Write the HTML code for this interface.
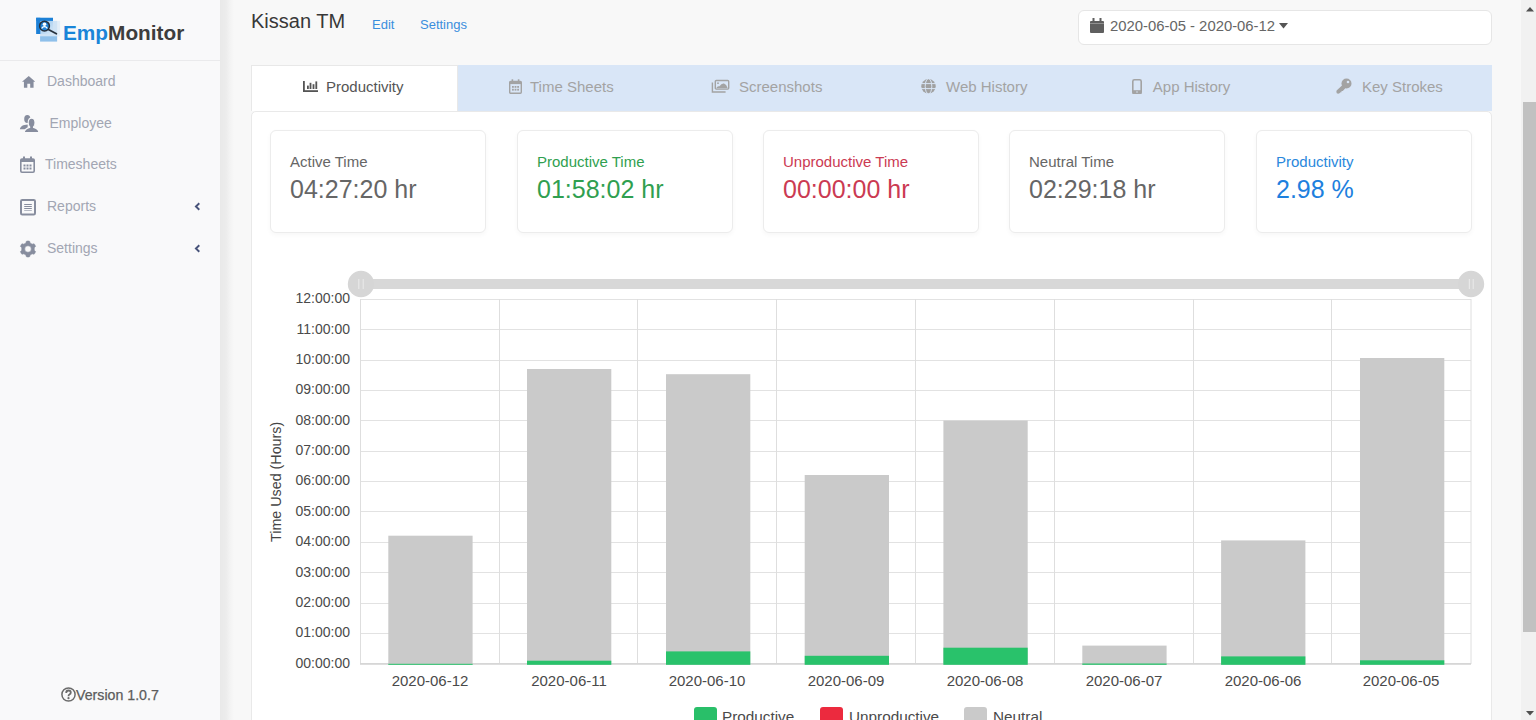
<!DOCTYPE html>
<html><head><meta charset="utf-8">
<style>
*{box-sizing:border-box;margin:0;padding:0}
html,body{width:1536px;height:720px;overflow:hidden;font-family:"Liberation Sans",sans-serif;background:#f8f8f8;position:relative}
.a{position:absolute;white-space:nowrap}
#side{position:absolute;left:0;top:0;width:220px;height:720px;background:#f9f9fa}
#shadow{position:absolute;left:220px;top:0;width:14px;height:720px;background:linear-gradient(to right,#e9e9e9 0px,#ececec 6px,#f3f3f3 10px,#f8f8f8 14px)}
.nav{font-size:14px;color:#a2a6b3;line-height:16px}
.ic{position:absolute}
.chev{position:absolute}
#scroll{position:absolute;left:1521px;top:0;width:15px;height:720px;background:#f1f1f1}
#thumb{position:absolute;left:1523px;top:102px;width:13px;height:530px;background:#c1c1c1}
.lnk{font-size:13px;color:#3a8edd;line-height:16px}
#date{position:absolute;left:1078px;top:10px;width:414px;height:35px;background:#fff;border:1px solid #e6e6e6;border-radius:6px}
#tabs{position:absolute;left:251px;top:65px;width:1241px;height:46px;background:#d9e6f7}
#tab1{position:absolute;left:251px;top:65px;width:206.5px;height:46px;background:#fff;border:1px solid #e8e8e8;border-bottom:none}
.tab{font-size:15px;color:#a3a3a3;line-height:18px}
#card{position:absolute;left:251px;top:111px;width:1241px;height:640px;background:#fff;border:1px solid #e9e9e9;border-radius:5px}
.stat{position:absolute;top:130px;width:216.3px;height:102.5px;background:#fff;border:1px solid #ececec;border-radius:6px;box-shadow:0 2px 5px rgba(0,0,0,0.035)}
.sl{position:absolute;left:19px;top:22.6px;font-size:15px;line-height:16px;white-space:nowrap}
.sv{position:absolute;left:19px;top:43.5px;font-size:25px;line-height:28px;white-space:nowrap}
.yl{font-size:14px;color:#4a4a4a;line-height:14px;text-align:right;width:80px}
.xl{font-size:15px;color:#4a4a4a;line-height:16px;text-align:center;width:138px}
.lg{font-size:15.3px;color:#4a4a4a;line-height:16px}
</style></head>
<body>
<div id="side"></div>
<div id="shadow"></div>
<div class="a" style="left:0;top:60px;width:220px;height:1px;background:#eaeaec"></div>

<!-- logo -->
<svg class="a" style="left:32px;top:14px" width="30" height="30" viewBox="0 0 30 30">
  <defs><linearGradient id="lg1" x1="0" y1="0" x2="1" y2="1"><stop offset="0" stop-color="#7fb8ea"/><stop offset="1" stop-color="#d9e9f7"/></linearGradient></defs>
  <rect x="8.1" y="6.9" width="20" height="15.5" fill="#e3eef8"/>
  <rect x="8.1" y="6.9" width="17" height="20.6" fill="#cfe3f5"/>
  <rect x="8.1" y="22.3" width="17" height="5.2" fill="#8fc0ea"/>
  <rect x="4.2" y="3.8" width="16.8" height="16.2" fill="url(#lg1)"/>
  <rect x="4.2" y="3.8" width="16.8" height="3.1" fill="#1c80d6"/>
  <rect x="4.2" y="3.8" width="4.1" height="16.2" fill="#1c80d6"/>
  <circle cx="12.5" cy="12.1" r="4.9" fill="#1f80d4" stroke="#26313d" stroke-width="1.5"/>
  <circle cx="12.5" cy="10.3" r="1.8" fill="#fff"/>
  <path d="M9.2 14.6 Q9.8 11.9 12.5 11.9 Q15.2 11.9 15.8 14.6 L14.4 14.6 Q13.9 13.2 12.5 13.2 Q11.1 13.2 10.6 14.6 Z" fill="#fff"/>
  <line x1="16.4" y1="15.4" x2="24.4" y2="19.8" stroke="#26313d" stroke-width="1.7" stroke-linecap="round"/>
</svg>
<div class="a" style="left:63px;top:21px;font-size:20.8px;font-weight:bold;line-height:24px"><span style="color:#1a85d8">Emp</span><span style="color:#3d3d3d">Monitor</span></div>

<!-- nav -->
<svg class="ic" style="left:21.7px;top:76.3px" width="13.5" height="11.7" viewBox="0 0 14 12"><path d="M7 0 L0 6 L2 6 L2 12 L5.5 12 L5.5 8 L8.5 8 L8.5 12 L12 12 L12 6 L14 6 Z" fill="#878d9e"/></svg>
<div class="a nav" style="left:47px;top:73px">Dashboard</div>

<svg class="ic" style="left:16px;top:110px" width="28" height="28" viewBox="0 0 28 28"><g fill="#878d9e"><ellipse cx="11.3" cy="9" rx="3.1" ry="4.1"/><path d="M3.9 19.2 C4.5 16.2 7 15 11.7 14.6 L11.7 19.2 Z"/></g><path fill="#878d9e" stroke="#f9f9fa" stroke-width="1.1" d="M8.2 22.6 C8.6 19.2 11.3 17.9 13.7 17.4 L13.7 16.9 C12.7 16.1 12.2 14.6 12.2 12.8 C12.2 10 13.7 8.1 15.6 8.1 C17.5 8.1 19 10 19 12.8 C19 14.6 18.5 16.1 17.5 16.9 L17.5 17.4 C19.9 17.9 22.6 19.2 23 22.6 Z"/></svg>
<div class="a nav" style="left:49.5px;top:114.8px">Employee</div>

<svg class="ic" style="left:20px;top:156px" width="15" height="17" viewBox="0 0 15 17"><rect x="0.8" y="3" width="13.4" height="13.2" rx="1.2" fill="none" stroke="#878d9e" stroke-width="1.6"/><rect x="0.8" y="3" width="13.4" height="3" fill="#878d9e"/><rect x="3" y="0.5" width="2" height="4" fill="#878d9e"/><rect x="10" y="0.5" width="2" height="4" fill="#878d9e"/><g fill="#878d9e"><rect x="3.5" y="8.5" width="2" height="2"/><rect x="6.5" y="8.5" width="2" height="2"/><rect x="9.5" y="8.5" width="2" height="2"/><rect x="3.5" y="11.5" width="2" height="2"/><rect x="6.5" y="11.5" width="2" height="2"/><rect x="9.5" y="11.5" width="2" height="2"/></g></svg>
<div class="a nav" style="left:45px;top:156px">Timesheets</div>

<svg class="ic" style="left:20px;top:198px" width="16" height="18" viewBox="0 0 16 18"><rect x="1" y="2" width="14" height="14.5" rx="1.3" fill="none" stroke="#878d9e" stroke-width="2"/><g fill="#878d9e"><rect x="4.2" y="6" width="7.6" height="1"/><rect x="4.2" y="8" width="7.6" height="1"/><rect x="4.2" y="10" width="7.6" height="1"/><rect x="4.2" y="12" width="7.6" height="1" opacity="0.6"/></g></svg>
<div class="a nav" style="left:47px;top:198px">Reports</div>
<svg class="chev" style="left:194px;top:202px" width="7" height="9" viewBox="0 0 7 9"><path d="M5.3 1.2 L1.9 4.5 L5.3 7.8" fill="none" stroke="#48537a" stroke-width="1.9"/></svg>

<svg class="ic" style="left:18.1px;top:238.8px" width="20" height="20" viewBox="0 0 20 20"><path fill="#878d9e" fill-rule="evenodd" stroke="#878d9e" stroke-width="0.6" stroke-linejoin="round" d="M16.30 10.00 L16.30 9.78 L16.28 9.56 L16.27 9.34 L16.24 9.12 L16.20 8.91 L16.37 8.65 L16.73 8.32 L17.08 7.97 L17.41 7.59 L17.52 7.26 L17.42 7.00 L17.31 6.75 L17.19 6.49 L17.06 6.24 L16.93 6.00 L16.78 5.76 L16.63 5.53 L16.47 5.30 L16.30 5.07 L16.13 4.86 L15.79 4.79 L15.30 4.89 L14.82 5.01 L14.36 5.16 L14.05 5.17 L13.88 5.04 L13.70 4.90 L13.52 4.78 L13.34 4.66 L13.15 4.54 L12.96 4.44 L12.76 4.34 L12.56 4.24 L12.36 4.16 L12.15 4.08 L12.01 3.81 L11.91 3.33 L11.78 2.86 L11.62 2.38 L11.39 2.12 L11.11 2.08 L10.84 2.04 L10.56 2.02 L10.28 2.00 L10.00 2.00 L9.72 2.00 L9.44 2.02 L9.16 2.04 L8.89 2.08 L8.61 2.12 L8.38 2.38 L8.22 2.86 L8.09 3.33 L7.99 3.81 L7.85 4.08 L7.64 4.16 L7.44 4.24 L7.24 4.34 L7.04 4.44 L6.85 4.54 L6.66 4.66 L6.48 4.78 L6.30 4.90 L6.12 5.04 L5.95 5.17 L5.64 5.16 L5.18 5.01 L4.70 4.89 L4.21 4.79 L3.87 4.86 L3.70 5.07 L3.53 5.30 L3.37 5.53 L3.22 5.76 L3.07 6.00 L2.94 6.24 L2.81 6.49 L2.69 6.75 L2.58 7.00 L2.48 7.26 L2.59 7.59 L2.92 7.97 L3.27 8.32 L3.63 8.65 L3.80 8.91 L3.76 9.12 L3.73 9.34 L3.72 9.56 L3.70 9.78 L3.70 10.00 L3.70 10.22 L3.72 10.44 L3.73 10.66 L3.76 10.88 L3.80 11.09 L3.63 11.35 L3.27 11.68 L2.92 12.03 L2.59 12.41 L2.48 12.74 L2.58 13.00 L2.69 13.25 L2.81 13.51 L2.94 13.76 L3.07 14.00 L3.22 14.24 L3.37 14.47 L3.53 14.70 L3.70 14.93 L3.87 15.14 L4.21 15.21 L4.70 15.11 L5.18 14.99 L5.64 14.84 L5.95 14.83 L6.12 14.96 L6.30 15.10 L6.48 15.22 L6.66 15.34 L6.85 15.46 L7.04 15.56 L7.24 15.66 L7.44 15.76 L7.64 15.84 L7.85 15.92 L7.99 16.19 L8.09 16.67 L8.22 17.14 L8.38 17.62 L8.61 17.88 L8.89 17.92 L9.16 17.96 L9.44 17.98 L9.72 18.00 L10.00 18.00 L10.28 18.00 L10.56 17.98 L10.84 17.96 L11.11 17.92 L11.39 17.88 L11.62 17.62 L11.78 17.14 L11.91 16.67 L12.01 16.19 L12.15 15.92 L12.36 15.84 L12.56 15.76 L12.76 15.66 L12.96 15.56 L13.15 15.46 L13.34 15.34 L13.52 15.22 L13.70 15.10 L13.88 14.96 L14.05 14.83 L14.36 14.84 L14.82 14.99 L15.30 15.11 L15.79 15.21 L16.13 15.14 L16.30 14.93 L16.47 14.70 L16.63 14.47 L16.78 14.24 L16.93 14.00 L17.06 13.76 L17.19 13.51 L17.31 13.25 L17.42 13.00 L17.52 12.74 L17.41 12.41 L17.08 12.03 L16.73 11.68 L16.37 11.35 L16.20 11.09 L16.24 10.88 L16.27 10.66 L16.28 10.44 L16.30 10.22 Z M13.30 10.00 A3.3 3.3 0 1 0 6.70 10.00 A3.3 3.3 0 1 0 13.30 10.00 Z"/></svg>
<div class="a nav" style="left:47px;top:240px">Settings</div>
<svg class="chev" style="left:194px;top:244px" width="7" height="9" viewBox="0 0 7 9"><path d="M5.3 1.2 L1.9 4.5 L5.3 7.8" fill="none" stroke="#48537a" stroke-width="1.9"/></svg>

<svg class="a" style="left:61px;top:686.5px" width="15" height="15" viewBox="0 0 15 15"><circle cx="7.5" cy="7.5" r="6.6" fill="none" stroke="#6b6b6b" stroke-width="1.5"/><path d="M5.2 5.9 Q5.2 3.5 7.5 3.5 Q9.8 3.5 9.8 5.6 Q9.8 6.9 8.4 7.5 Q7.5 7.9 7.5 9.2" fill="none" stroke="#6b6b6b" stroke-width="1.8"/><circle cx="7.5" cy="11.2" r="1.1" fill="#6b6b6b"/></svg>
<div class="a" style="left:76px;top:687px;font-size:14.2px;color:#5c5c5c;line-height:16px;-webkit-text-stroke:0.25px #5c5c5c">Version 1.0.7</div>

<!-- header -->
<div class="a" style="left:251px;top:8.8px;font-size:20px;color:#383838;line-height:24px">Kissan TM</div>
<div class="a lnk" style="left:372px;top:17px">Edit</div>
<div class="a lnk" style="left:420px;top:17px">Settings</div>

<div id="date"></div>
<svg class="a" style="left:1090px;top:18px" width="14" height="15" viewBox="0 0 14 15"><rect x="0" y="3" width="14" height="12" rx="1" fill="#5f5f5f"/><rect x="2.5" y="0" width="2" height="4" fill="#5f5f5f"/><rect x="9.5" y="0" width="2" height="4" fill="#5f5f5f"/><rect x="0" y="5" width="14" height="0.8" fill="#fff" opacity="0.4"/></svg>
<div class="a" style="left:1110px;top:18px;font-size:14.85px;color:#666;line-height:17px">2020-06-05 - 2020-06-12</div>
<svg class="a" style="left:1279px;top:23px" width="9" height="6" viewBox="0 0 9 6"><path d="M0 0 L9 0 L4.5 5.5 Z" fill="#555"/></svg>

<!-- tabs -->
<div id="tabs"></div>
<div id="tab1"></div>
<div id="card"></div>
<!-- tab labels -->
<svg class="a" style="left:303px;top:81px" width="15" height="11" viewBox="0 0 15 11"><g fill="#555"><rect x="0" y="0" width="1.8" height="11"/><rect x="0" y="9.2" width="15" height="1.8"/><rect x="4" y="4.6" width="1.8" height="3.4"/><rect x="6.6" y="1.8" width="1.8" height="6.2"/><rect x="9.6" y="3.2" width="1.8" height="4.8"/><rect x="12.4" y="0.4" width="1.8" height="7.6"/></g></svg>
<div class="a tab" style="left:326px;top:78px;color:#555">Productivity</div>

<svg class="a" style="left:509px;top:79px" width="13" height="15" viewBox="0 0 13 15"><rect x="0.7" y="2.5" width="11.6" height="11.8" rx="1" fill="none" stroke="#a3a3a3" stroke-width="1.4"/><rect x="0.7" y="2.5" width="11.6" height="2.6" fill="#a3a3a3"/><rect x="2.6" y="0.3" width="1.6" height="3.2" fill="#a3a3a3"/><rect x="8.8" y="0.3" width="1.6" height="3.2" fill="#a3a3a3"/><g fill="#a3a3a3"><rect x="3" y="7" width="1.8" height="1.8"/><rect x="5.6" y="7" width="1.8" height="1.8"/><rect x="8.2" y="7" width="1.8" height="1.8"/><rect x="3" y="9.8" width="1.8" height="1.8"/><rect x="5.6" y="9.8" width="1.8" height="1.8"/><rect x="8.2" y="9.8" width="1.8" height="1.8"/></g></svg>
<div class="a tab" style="left:530px;top:78px">Time Sheets</div>

<svg class="a" style="left:711px;top:79px" width="19" height="15" viewBox="0 0 19 15"><rect x="4.3" y="1.5" width="13.4" height="8.6" rx="1" fill="none" stroke="#a3a3a3" stroke-width="1.4"/><path d="M1.4 3.5 L1.4 13 L14.6 13" fill="none" stroke="#a3a3a3" stroke-width="1.4"/><path d="M5.6 9.2 L5.6 8.4 Q7 7 8.5 7.3 Q10.5 4.2 13 4.6 Q15.5 5.5 16.4 8.4 L16.4 9.2 Z" fill="#a3a3a3"/><circle cx="7" cy="4.2" r="0.9" fill="#a3a3a3"/></svg>
<div class="a tab" style="left:739px;top:78px">Screenshots</div>

<svg class="a" style="left:921px;top:79px" width="15" height="15" viewBox="0 0 15 15"><circle cx="7.5" cy="7.3" r="7.2" fill="#a0a0a0"/><g stroke="#d9e6f7" stroke-width="1" fill="none"><line x1="0" y1="4.6" x2="15" y2="4.6"/><line x1="0" y1="9.6" x2="15" y2="9.6"/><ellipse cx="7.5" cy="7.3" rx="3.3" ry="7.6"/></g></svg>
<div class="a tab" style="left:946px;top:78px">Web History</div>

<svg class="a" style="left:1132px;top:78.5px" width="10" height="15.5" viewBox="0 0 10 15.5"><rect x="0.8" y="0.8" width="8.4" height="13.9" rx="1.6" fill="none" stroke="#a3a3a3" stroke-width="1.6"/><rect x="0.8" y="11.2" width="8.4" height="3.5" fill="#a3a3a3"/><rect x="4.3" y="12.4" width="1.4" height="1.2" fill="#d9e6f7"/></svg>
<div class="a tab" style="left:1152.8px;top:78px">App History</div>

<svg class="a" style="left:1336px;top:78px" width="16" height="16" viewBox="0 0 16 16"><circle cx="10.5" cy="5.5" r="5" fill="#a3a3a3"/><circle cx="12" cy="4" r="1.3" fill="#d9e6f7"/><path d="M6.8 6.8 L0.6 12.6 Q0 14 0.8 15.2 Q2 16 3.5 15.3 L4.5 14.3 L5.5 14.3 L5.5 13 L6.8 13 L9.5 10 Z" fill="#a3a3a3"/></svg>
<div class="a tab" style="left:1362px;top:78px">Key Strokes</div>

<!-- stat cards -->
<div class="stat" style="left:270px"><div class="sl" style="color:#666">Active Time</div><div class="sv" style="color:#666">04:27:20 hr</div></div>
<div class="stat" style="left:517px"><div class="sl" style="color:#309f50">Productive Time</div><div class="sv" style="color:#309f50">01:58:02 hr</div></div>
<div class="stat" style="left:763px"><div class="sl" style="color:#cb3a52">Unproductive Time</div><div class="sv" style="color:#cb3a52">00:00:00 hr</div></div>
<div class="stat" style="left:1009px"><div class="sl" style="color:#666">Neutral Time</div><div class="sv" style="color:#666">02:29:18 hr</div></div>
<div class="stat" style="left:1256px"><div class="sl" style="color:#2a88dc">Productivity</div><div class="sv" style="color:#1d80de">2.98 %</div></div>

<!-- chart -->
<svg class="a" style="left:0;top:0" width="1536" height="720" viewBox="0 0 1536 720">
  <g stroke="#e2e2e2" stroke-width="1">
    <line x1="360" y1="299.5" x2="1471" y2="299.5"/>
    <line x1="360" y1="329.5" x2="1471" y2="329.5"/>
    <line x1="360" y1="360.5" x2="1471" y2="360.5"/>
    <line x1="360" y1="390.5" x2="1471" y2="390.5"/>
    <line x1="360" y1="420.5" x2="1471" y2="420.5"/>
    <line x1="360" y1="451.5" x2="1471" y2="451.5"/>
    <line x1="360" y1="481.5" x2="1471" y2="481.5"/>
    <line x1="360" y1="511.5" x2="1471" y2="511.5"/>
    <line x1="360" y1="542.5" x2="1471" y2="542.5"/>
    <line x1="360" y1="572.5" x2="1471" y2="572.5"/>
    <line x1="360" y1="603.5" x2="1471" y2="603.5"/>
    <line x1="360" y1="633.5" x2="1471" y2="633.5"/>
  </g>
  <g stroke="#dedede" stroke-width="1">
    <line x1="360.5" y1="299" x2="360.5" y2="664"/>
    <line x1="499.5" y1="299" x2="499.5" y2="664"/>
    <line x1="637.5" y1="299" x2="637.5" y2="664"/>
    <line x1="776.5" y1="299" x2="776.5" y2="664"/>
    <line x1="915.5" y1="299" x2="915.5" y2="664"/>
    <line x1="1054.5" y1="299" x2="1054.5" y2="664"/>
    <line x1="1193.5" y1="299" x2="1193.5" y2="664"/>
    <line x1="1331.5" y1="299" x2="1331.5" y2="664"/>
    <line x1="1471" y1="299" x2="1471" y2="664"/>
  </g>
  <rect x="360" y="663" width="1111" height="1.8" fill="#d6d6d6"/>
  <g fill="#cacaca">
    <rect x="388.3" y="535.7" width="84.3" height="129.1"/>
    <rect x="527" y="369" width="84.3" height="295.8"/>
    <rect x="666" y="374.2" width="84.3" height="290.6"/>
    <rect x="804.7" y="475" width="84.3" height="189.8"/>
    <rect x="943.4" y="420.6" width="84.3" height="244.2"/>
    <rect x="1082.3" y="645.6" width="84.3" height="19.2"/>
    <rect x="1221.1" y="540.4" width="84.3" height="124.4"/>
    <rect x="1360" y="358" width="84.3" height="306.8"/>
  </g>
  <g fill="#29c26b">
    <rect x="388.3" y="663.8" width="84.3" height="1"/>
    <rect x="527" y="660.7" width="84.3" height="4.1"/>
    <rect x="666" y="651.4" width="84.3" height="13.4"/>
    <rect x="804.7" y="655.8" width="84.3" height="9.0"/>
    <rect x="943.4" y="647.7" width="84.3" height="17.1"/>
    <rect x="1082.3" y="663.5" width="84.3" height="1.3"/>
    <rect x="1221.1" y="656.4" width="84.3" height="8.4"/>
    <rect x="1360" y="660.3" width="84.3" height="4.5"/>
  </g>
  <!-- slider -->
  <rect x="361" y="279" width="1110" height="10" fill="#d8d8d8"/>
  <circle cx="361" cy="284" r="13.2" fill="#d6d6d6"/>
  <circle cx="1471" cy="284" r="13.2" fill="#d6d6d6"/>
  <g stroke="#eeeeee" stroke-width="0.9"><line x1="358.8" y1="279" x2="358.8" y2="289"/><line x1="363.2" y1="279" x2="363.2" y2="289"/><line x1="1469.3" y1="279" x2="1469.3" y2="289"/><line x1="1473.2" y1="279" x2="1473.2" y2="289"/></g>
</svg>

<div class="a yl" style="left:270px;top:291.1px">12:00:00</div>
<div class="a yl" style="left:270px;top:321.5px">11:00:00</div>
<div class="a yl" style="left:270px;top:351.9px">10:00:00</div>
<div class="a yl" style="left:270px;top:382.2px">09:00:00</div>
<div class="a yl" style="left:270px;top:412.6px">08:00:00</div>
<div class="a yl" style="left:270px;top:443.0px">07:00:00</div>
<div class="a yl" style="left:270px;top:473.4px">06:00:00</div>
<div class="a yl" style="left:270px;top:503.7px">05:00:00</div>
<div class="a yl" style="left:270px;top:534.1px">04:00:00</div>
<div class="a yl" style="left:270px;top:564.5px">03:00:00</div>
<div class="a yl" style="left:270px;top:594.9px">02:00:00</div>
<div class="a yl" style="left:270px;top:625.2px">01:00:00</div>
<div class="a yl" style="left:270px;top:655.6px">00:00:00</div>

<div class="a" style="left:216px;top:474px;width:120px;text-align:center;transform:rotate(-90deg);font-size:14.3px;color:#444;line-height:16px">Time Used (Hours)</div>

<div class="a xl" style="left:361px;top:672.5px">2020-06-12</div>
<div class="a xl" style="left:500px;top:672.5px">2020-06-11</div>
<div class="a xl" style="left:638px;top:672.5px">2020-06-10</div>
<div class="a xl" style="left:777px;top:672.5px">2020-06-09</div>
<div class="a xl" style="left:916px;top:672.5px">2020-06-08</div>
<div class="a xl" style="left:1055px;top:672.5px">2020-06-07</div>
<div class="a xl" style="left:1194px;top:672.5px">2020-06-06</div>
<div class="a xl" style="left:1332px;top:672.5px">2020-06-05</div>

<div class="a" style="left:694px;top:707px;width:23px;height:20px;background:#29bf69;border-radius:3px"></div>
<div class="a lg" style="left:722px;top:709px">Productive</div>
<div class="a" style="left:820px;top:707px;width:23px;height:20px;background:#ec2a3e;border-radius:3px"></div>
<div class="a lg" style="left:849px;top:709px">Unproductive</div>
<div class="a" style="left:964px;top:707px;width:23px;height:20px;background:#cacaca;border-radius:3px"></div>
<div class="a lg" style="left:993px;top:709px">Neutral</div>

<!-- scrollbar -->
<div id="scroll"></div><div id="thumb"></div>
<svg class="a" style="left:1525.5px;top:7px" width="8" height="4.5" viewBox="0 0 9 5"><path d="M0 5 L4.5 0 L9 5 Z" fill="#505050"/></svg>
<svg class="a" style="left:1525.5px;top:711.3px" width="8" height="4.5" viewBox="0 0 9 5"><path d="M0 0 L4.5 5 L9 0 Z" fill="#505050"/></svg>
</body></html>
